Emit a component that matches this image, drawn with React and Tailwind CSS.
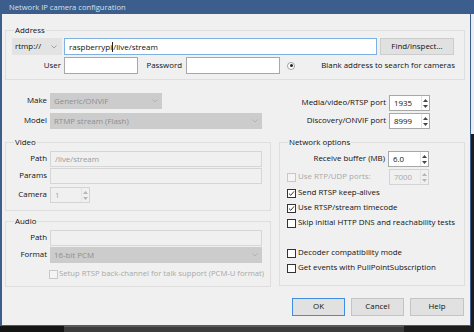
import React from "react"

const Arrows = ({ disabled }) => (
  <div className="w-[8px] flex flex-col items-center justify-center gap-[3px] border-l border-[#e4e4e4]">
    <svg width="5" height="3" viewBox="0 0 5 3">
      <path d="M0 3 L2.5 0 L5 3 Z" fill={disabled ? "#b5b5b5" : "#444"} />
    </svg>
    <svg width="5" height="3" viewBox="0 0 5 3">
      <path d="M0 0 L2.5 3 L5 0 Z" fill={disabled ? "#b5b5b5" : "#444"} />
    </svg>
  </div>
)

const Spin = ({ value, className = "w-[41px]", disabled }) => (
  <div
    className={`flex h-[16px] border ${className} ${
      disabled ? "border-[#d4d4d4] bg-[#f0f0f0] text-[#a8a8a8]" : "border-[#a8a8a8] bg-white text-[#111]"
    }`}
  >
    <span className="flex-1 pl-[4px] leading-[14px]">{value}</span>
    <Arrows disabled={disabled} />
  </div>
)

const Chevron = ({ color = "#9a9a9a" }) => (
  <svg width="6" height="4" viewBox="0 0 6 4">
    <path d="M0.5 0.5 L3 3 L5.5 0.5" fill="none" stroke={color} strokeWidth="0.9" />
  </svg>
)

const Combo = ({ value, className }) => (
  <div className={`flex items-center h-[16px] bg-[#cccccc] text-[#8e8e8e] pl-[4px] pr-[4px] ${className}`}>
    <span className="flex-1 leading-[14px]">{value}</span>
    <Chevron color="#b0b0b0" />
  </div>
)

const Check = ({ checked, disabled }) => (
  <span
    className={`w-[9px] h-[9px] border flex items-center justify-center shrink-0 ${
      disabled ? "border-[#c8c8c8] bg-[#f4f4f4]" : "border-[#333] bg-white"
    }`}
  >
    {checked && (
      <svg width="7" height="7" viewBox="0 0 7 7">
        <path d="M1 3.6 L2.8 5.3 L6 1.4" fill="none" stroke="#222" strokeWidth="0.9" />
      </svg>
    )}
  </span>
)

const CheckRow = ({ label, checked, disabled, className = "" }) => (
  <div className={`flex items-center gap-[2px] h-[14px] whitespace-nowrap ${className}`}>
    <Check checked={checked} disabled={disabled} />
    <span className={disabled ? "text-[#a8a8a8]" : ""}>{label}</span>
  </div>
)

const Group = ({ title, className = "", children }) => (
  <fieldset className={`border border-[#dedede] ${className}`}>
    <legend className="ml-[8px] px-[1px] leading-[14px]">{title}</legend>
    {children}
  </fieldset>
)

const Field = ({ label, children, className = "" }) => (
  <div className={`flex items-center ${className}`}>
    <span className="w-[44px] text-right pr-[3px]">{label}</span>
    {children}
  </div>
)

const Button = ({ label, focused, className = "w-[53px]" }) => (
  <button
    className={`h-[18px] ${className} bg-[#e1e1e1] border ${
      focused ? "border-[#3d8ee0]" : "border-[#c4c4c4]"
    } text-[#111]`}
  >
    {label}
  </button>
)

export default function App() {
  return (
    <div className="w-[474px] h-[332px] bg-[#1c1c1c] flex flex-col overflow-hidden font-['Open_Sans',sans-serif] text-[7.9px] text-[#111]">
      <div className="flex h-[326px]">
        <div className="w-[471px] bg-[#3b5e8c] flex flex-col">
          <div className="h-[14px] pl-[9px] leading-[14px] text-[#d6e0ec] text-[7.6px]">
            Network IP camera configuration
          </div>
          <div className="flex-1 ml-[2px] mr-[1px] mb-[1px] bg-[#f0f0f0] pl-[3px] pt-[9px] flex flex-col">
            <Group title="Address" className="w-[460px]">
              <div className="pl-[6px] pr-[9px] pt-[1px] pb-[5px]">
                <div className="flex h-[17px] gap-[2px]">
                  <div className="w-[50px] flex items-center bg-[#e3e3e3] pl-[3px] pr-[5px]">
                    <span className="flex-1">rtmp://</span>
                    <Chevron />
                  </div>
                  <div className="w-[313px] border border-[#7fb2e3] bg-white flex items-center pl-[4px] text-[8px]">
                    raspberrypi<span className="w-px h-[10px] bg-[#222]" />/live/stream
                  </div>
                  <button className="ml-[1px] w-[74px] bg-[#e1e1e1] border border-[#cdcdcd]">Find/inspect...</button>
                </div>
                <div className="flex h-[17px] mt-[2px] items-center">
                  <span className="w-[52px] text-right pr-[3px]">User</span>
                  <div className="w-[74px] h-full border border-[#a8a8a8] bg-white" />
                  <span className="w-[48px] text-right pr-[4px]">Password</span>
                  <div className="w-[94px] h-full border border-[#a8a8a8] bg-white" />
                  <span className="ml-[7px] w-[8px] h-[8px] rounded-full border border-[#a0a0a0] bg-white flex items-center justify-center">
                    <span className="w-[3px] h-[3px] rounded-full bg-[#222]" />
                  </span>
                  <span className="flex-1 text-right">Blank address to search for cameras</span>
                </div>
              </div>
            </Group>

            <div className="flex gap-[8px]">
              <div className="w-[266px] flex flex-col">
                <div className="flex items-center mt-[13px]">
                  <span className="w-[45px] text-right pr-[3px]">Make</span>
                  <Combo value="Generic/ONVIF" className="w-[112px]" />
                </div>
                <div className="flex items-center mt-[4px]">
                  <span className="w-[45px] text-right pr-[3px]">Model</span>
                  <Combo value="RTMP stream (Flash)" className="w-[212px]" />
                </div>

                <Group title="Video" className="mt-[6px]">
                  <div className="pt-[2px] pb-[7px] flex flex-col">
                    <Field label="Path">
                      <div className="w-[212px] h-[16px] border border-[#d6d6d6] pl-[4px] leading-[14px] text-[#9a9a9a]">
                        /live/stream
                      </div>
                    </Field>
                    <Field label="Params" className="mt-[1px]">
                      <div className="w-[212px] h-[16px] border border-[#d6d6d6]" />
                    </Field>
                    <Field label="Camera" className="mt-[3px]">
                      <Spin value="1" className="w-[40px]" disabled />
                    </Field>
                  </div>
                </Group>

                <Group title="Audio" className="mt-[3px]">
                  <div className="pt-[2px] pb-[5px] flex flex-col">
                    <Field label="Path">
                      <div className="w-[212px] h-[16px] border border-[#d6d6d6]" />
                    </Field>
                    <Field label="Format" className="mt-[1px]">
                      <Combo value="16-bit PCM" className="w-[212px]" />
                    </Field>
                    <CheckRow
                      className="mt-[4px] ml-[43px] !gap-px text-[7.7px]"
                      label="Setup RTSP back-channel for talk support (PCM-U format)"
                      disabled
                    />
                  </div>
                </Group>
              </div>

              <div className="w-[186px] flex flex-col">
                <div className="flex items-center justify-end pr-[35px] mt-[15px]">
                  <span className="mr-[3px]">Media/video/RTSP port</span>
                  <Spin value="1935" />
                </div>
                <div className="flex items-center justify-end pr-[35px] mt-[2px]">
                  <span className="mr-[3px]">Discovery/ONVIF port</span>
                  <Spin value="8999" />
                </div>

                <Group title="Network options" className="mt-[6px]">
                  <div className="pl-[7px] pt-[2px] pb-[10px] flex flex-col">
                    <div className="flex items-center justify-end pr-[35px]">
                      <span className="mr-[3px]">Receive buffer (MB)</span>
                      <Spin value="6.0" />
                    </div>
                    <div className="flex items-center justify-between pr-[35px] mt-[2px]">
                      <CheckRow label="Use RTP/UDP ports:" disabled />
                      <Spin value="7000" className="w-[40px]" disabled />
                    </div>
                    <CheckRow label="Send RTSP keep-alives" checked className="mt-[1px]" />
                    <CheckRow label="Use RTSP/stream timecode" checked className="mt-[1px]" />
                    <CheckRow label="Skip initial HTTP DNS and reachability tests" className="mt-[1px]" />
                    <CheckRow label="Decoder compatibility mode" className="mt-[16px]" />
                    <CheckRow label="Get events with PullPointSubscription" className="mt-[1px]" />
                  </div>
                </Group>
              </div>
            </div>

            <div className="flex justify-end gap-[6px] pr-[6px] mt-[11px]">
              <Button label="OK" focused />
              <Button label="Cancel" />
              <Button label="Help" className="w-[54px]" />
            </div>
          </div>
        </div>
        <div className="flex-1 flex flex-col">
          <div className="h-[14px] bg-[#3b5e8c]" />
          <div className="h-[120px] bg-[#e9edf1]" />
          <div className="flex-1 bg-[#1c1c1c]" />
        </div>
      </div>
      <div className="flex-1 flex">
        <div className="w-[64px] bg-[#151515]" />
        <div className="w-[340px] bg-[#3c3c3c] border-t border-[#5a5a5a]" />
        <div className="flex-1 bg-[#1c1c1c]" />
      </div>
    </div>
  )
}
